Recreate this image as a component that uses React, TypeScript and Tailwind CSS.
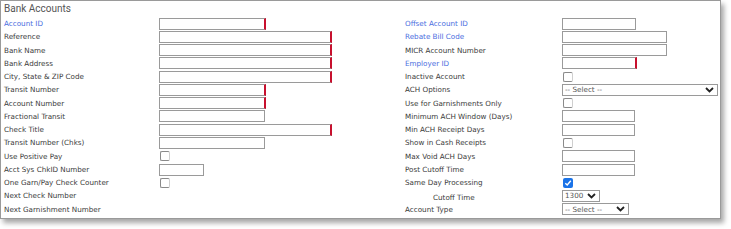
import React from 'react';

type Field =
  | { kind: 'text'; w: string; req?: boolean }
  | { kind: 'check'; checked?: boolean }
  | { kind: 'select'; w: string; text: string }
  | { kind: 'none' };

type Row = { label: string; blue?: boolean; indent?: boolean; field: Field };

const leftRows: Row[] = [
  { label: 'Account ID', blue: true, field: { kind: 'text', w: 'w-[107px]', req: true } },
  { label: 'Reference', field: { kind: 'text', w: 'w-[173px]', req: true } },
  { label: 'Bank Name', field: { kind: 'text', w: 'w-[173px]', req: true } },
  { label: 'Bank Address', field: { kind: 'text', w: 'w-[173px]', req: true } },
  { label: 'City, State & ZIP Code', field: { kind: 'text', w: 'w-[173px]', req: true } },
  { label: 'Transit Number', field: { kind: 'text', w: 'w-[107px]', req: true } },
  { label: 'Account Number', field: { kind: 'text', w: 'w-[107px]', req: true } },
  { label: 'Fractional Transit', field: { kind: 'text', w: 'w-[106px]' } },
  { label: 'Check Title', field: { kind: 'text', w: 'w-[173px]', req: true } },
  { label: 'Transit Number (Chks)', field: { kind: 'text', w: 'w-[106px]' } },
  { label: 'Use Positive Pay', field: { kind: 'check' } },
  { label: 'Acct Sys ChkID Number', field: { kind: 'text', w: 'w-[45px]' } },
  { label: 'One Garn/Pay Check Counter', field: { kind: 'check' } },
  { label: 'Next Check Number', field: { kind: 'none' } },
  { label: 'Next Garnishment Number', field: { kind: 'none' } },
];

const rightRows: Row[] = [
  { label: 'Offset Account ID', blue: true, field: { kind: 'text', w: 'w-[74px]' } },
  { label: 'Rebate Bill Code', blue: true, field: { kind: 'text', w: 'w-[105px]' } },
  { label: 'MICR Account Number', field: { kind: 'text', w: 'w-[105px]' } },
  { label: 'Employer ID', blue: true, field: { kind: 'text', w: 'w-[75px]', req: true } },
  { label: 'Inactive Account', field: { kind: 'check' } },
  { label: 'ACH Options', field: { kind: 'select', w: 'w-[156px]', text: '-- Select --' } },
  { label: 'Use for Garnishments Only', field: { kind: 'check' } },
  { label: 'Minimum ACH Window (Days)', field: { kind: 'text', w: 'w-[73px]' } },
  { label: 'Min ACH Receipt Days', field: { kind: 'text', w: 'w-[73px]' } },
  { label: 'Show in Cash Receipts', field: { kind: 'check' } },
  { label: 'Max Void ACH Days', field: { kind: 'text', w: 'w-[73px]' } },
  { label: 'Post Cutoff Time', field: { kind: 'text', w: 'w-[73px]' } },
  { label: 'Same Day Processing', field: { kind: 'check', checked: true } },
  { label: 'Cutoff Time', indent: true, field: { kind: 'select', w: 'w-[38px]', text: '1300' } },
  { label: 'Account Type', field: { kind: 'select', w: 'w-[67px]', text: '-- Select --' } },
];

const Chevron = () => (
  <svg width="9" height="6" viewBox="0 0 9 6" className="shrink-0">
    <path d="M1 1 L4.5 4.5 L8 1" fill="none" stroke="#222" strokeWidth="1.8" />
  </svg>
);

const FieldView: React.FC<{ f: Field }> = ({ f }) => {
  if (f.kind === 'text')
    return (
      <div
        className={`${f.w} shrink-0 h-[12px] bg-white border border-[#9a9a9a] ${
          f.req ? 'border-r-2 border-r-[#c8102e]' : ''
        }`}
      />
    );
  if (f.kind === 'check')
    return f.checked ? (
      <div className="w-[10px] h-[10px] ml-[1px] rounded-[2px] bg-[#1a73e8] flex items-center justify-center">
        <svg width="8" height="8" viewBox="0 0 8 8">
          <path d="M1.3 4.2 L3.2 6 L6.8 1.8" fill="none" stroke="#fff" strokeWidth="1.4" />
        </svg>
      </div>
    ) : (
      <div className="w-[10px] h-[10px] ml-[1px] rounded-[2px] bg-white border border-[#8a8a8a] border-r-[#cfcfcf]" />
    );
  if (f.kind === 'select')
    return (
      <div
        className={`${f.w} shrink-0 h-[12px] bg-white border border-[#9a9a9a] flex items-center justify-between pl-[2px] pr-[3px] text-[#555]`}
      >
        <span className="leading-none">{f.text}</span>
        <Chevron />
      </div>
    );
  return null;
};

const Column: React.FC<{ rows: Row[]; labelW: string }> = ({ rows, labelW }) => (
  <div className="flex flex-col">
    {rows.map((r) => (
      <div key={r.label} className="flex items-center h-[13.28px]">
        <div
          className={`${labelW} shrink-0 leading-none whitespace-nowrap ${r.indent ? 'pl-[28px] pt-[3px]' : ''} ${
            r.blue ? 'text-[#4a6ee0]' : 'text-[#3a3a3a]'
          }`}
        >
          {r.label}
        </div>
        <FieldView f={r.field} />
      </div>
    ))}
  </div>
);

export default function App() {
  return (
    <div className="w-[731px] h-[229px] bg-white">
      <div
        className="w-[721px] h-[219px] border border-[#9a9a9a] bg-white shadow-[3px_4px_5px_rgba(0,0,0,0.35)] pl-[3px] pt-[1px]"
        style={{ fontFamily: '"DejaVu Sans", Verdana, sans-serif' }}
      >
        <div
          className="text-[10px] text-[#555] leading-[14px] h-[15px]"
          style={{ fontFamily: 'Roboto, "Noto Sans", sans-serif' }}
        >
          Bank Accounts
        </div>
        <div className="flex text-[7.2px]">
          <div className="w-[401px] shrink-0">
            <Column rows={leftRows} labelW="w-[155px]" />
          </div>
          <div>
            <Column rows={rightRows} labelW="w-[157px]" />
          </div>
        </div>
      </div>
    </div>
  );
}
